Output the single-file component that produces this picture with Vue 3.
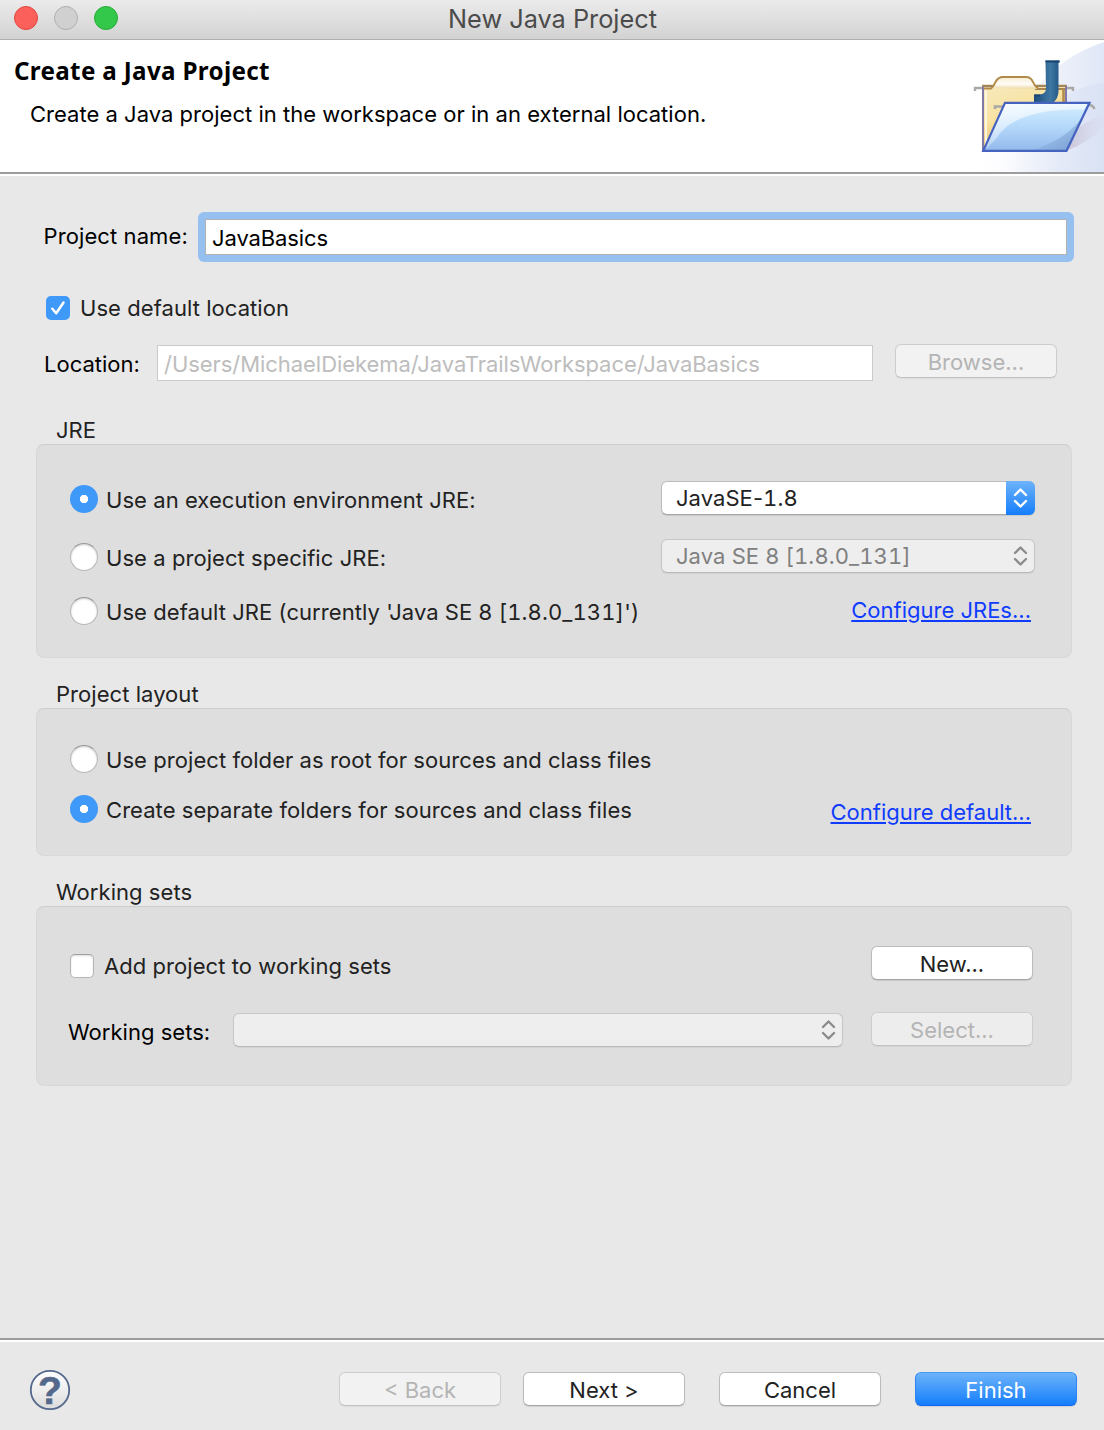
<template>
  <div class="dialog">
    <div class="titlebar">
      <div class="lights">
        <i class="light close"></i>
        <i class="light minimize"></i>
        <i class="light zoom"></i>
      </div>
      <div class="title">New Java Project</div>
    </div>

    <header class="banner">
      <div class="banner-text">
        <h1>Create a Java Project</h1>
        <p>Create a Java project in the workspace or in an external location.</p>
      </div>
      <svg class="banner-icon" width="160" height="132" viewBox="0 0 160 132">
        <defs>
          <linearGradient id="sky" x1="0" y1="0" x2="1" y2="0">
            <stop offset="0" stop-color="#fff" stop-opacity="0" />
            <stop offset="0.5" stop-color="#f4f6fc" />
            <stop offset="1" stop-color="#e0e7f6" />
          </linearGradient>
          <linearGradient id="haze" x1="0" y1="0" x2="1" y2="0">
            <stop offset="0" stop-color="#d5dff3" stop-opacity="0" />
            <stop offset="1" stop-color="#d5dff3" stop-opacity="0.6" />
          </linearGradient>
          <linearGradient id="gold" x1="0" y1="0" x2="0.5" y2="1">
            <stop offset="0" stop-color="#f6e9bd" />
            <stop offset="0.45" stop-color="#f8e3a4" />
            <stop offset="1" stop-color="#eeb95c" />
          </linearGradient>
          <linearGradient id="tab" x1="0" y1="0" x2="0" y2="1">
            <stop offset="0" stop-color="#f6ecd2" />
            <stop offset="0.6" stop-color="#fffdf8" />
            <stop offset="1" stop-color="#ecd9a6" />
          </linearGradient>
          <linearGradient id="front" x1="0" y1="0" x2="0" y2="1">
            <stop offset="0" stop-color="#d6efff" />
            <stop offset="0.5" stop-color="#b4d8fa" />
            <stop offset="1" stop-color="#93b9ec" />
          </linearGradient>
          <linearGradient id="shine" x1="0" y1="0" x2="0.5" y2="1">
            <stop offset="0" stop-color="#fff" stop-opacity="0.85" />
            <stop offset="1" stop-color="#fff" stop-opacity="0.15" />
          </linearGradient>
          <linearGradient id="dusk" x1="0" y1="0.3" x2="1" y2="0.8">
            <stop offset="0" stop-color="#6f94c6" stop-opacity="0" />
            <stop offset="1" stop-color="#6f94c6" stop-opacity="0.65" />
          </linearGradient>
          <linearGradient id="jay" x1="0" y1="0" x2="1" y2="0">
            <stop offset="0" stop-color="#1d4c7c" />
            <stop offset="0.65" stop-color="#3f78a3" />
            <stop offset="1" stop-color="#225686" />
          </linearGradient>
          <linearGradient id="shadow" x1="0" y1="0" x2="1" y2="0">
            <stop offset="0" stop-color="#b9adc6" stop-opacity="0.6" />
            <stop offset="1" stop-color="#d8d2e4" stop-opacity="0.1" />
          </linearGradient>
        </defs>
        <path d="M18 132C68 112 74 30 160 2V132Z" fill="url(#sky)" />
        <path d="M100 72C120 52 140 45 160 43V132H60Z" fill="url(#haze)" />
        <path d="M124 108L134 88Q148 78 160 75V86Q146 102 124 110Z" fill="url(#shadow)" />
        <path d="M31 51V48H38M122 48H129V51" fill="none" stroke="#a9a9a6" stroke-width="2.4" />
        <path d="M39 46H122V110H39Z" fill="url(#gold)" stroke="#8278a8" stroke-width="2" />
        <path d="M42 50V104" stroke="#fdf6df" stroke-width="2" />
        <path d="M38 45.8H122.500M91 49H121" stroke="#a68752" stroke-width="2" />
        <path d="M119.500 49V62" stroke="#b08a4b" stroke-width="2.500" />
        <path d="M47 48Q50 46 51.500 42Q54 37 59 37H82Q87 37 89 42Q90.500 46 94 49Z" fill="url(#tab)" />
        <path d="M40 48.500H47Q50 46 51.500 42Q54 37 59 37H82Q87 37 89 42Q90.500 46 94 48.500" fill="none" stroke="#b18a49" stroke-width="2" />
        <path d="M101.500 20.500H115.500V22.500H114.500V51Q114.500 58 109 63H90V54.500H95Q102 54.500 102 48Z" fill="url(#jay)" />
        <path d="M101.500 21.500H115.500M90.500 55.500H96" stroke="#174570" stroke-width="1.8" />
        <path d="M51 69V66.500H59M145 65Q149 65 150.500 69" fill="none" stroke="#a9a9a6" stroke-width="2.600" />
        <path d="M61 62.800H145.500L122.500 110.800H39.200Z" fill="url(#front)" />
        <path d="M61.500 64H143L140 69.500Q70 68 52 99L43 108H41Z" fill="url(#shine)" />
        <path d="M137 79L122 110H88Q121 100 137 79Z" fill="url(#dusk)" />
        <path d="M61 62.800H145.500L122.500 110.800H39.200Z" fill="none" stroke="#4563bf" stroke-width="2.200" />
      </svg>
    </header>

    <main class="content">
      <div class="name-row">
        <span class="label">Project name:</span>
        <div class="focus-ring"><div class="field">JavaBasics</div></div>
      </div>

      <div class="check default-location">
        <span class="checkbox checked">
          <svg width="24" height="24" viewBox="0 0 24 24">
            <path d="M6.300 12.800L10.200 17.300L17.500 6.500" fill="none" stroke="#fff" stroke-width="2.500" stroke-linecap="round" stroke-linejoin="round" />
          </svg>
        </span>
        <span>Use default location</span>
      </div>

      <div class="location-row">
        <span class="label">Location:</span>
        <div class="field location">/Users/MichaelDiekema/JavaTrailsWorkspace/JavaBasics</div>
        <button class="btn" disabled>Browse...</button>
      </div>

      <section class="group jre">
        <h2>JRE</h2>
        <div class="box">
          <div class="row tall">
            <div class="option"><i class="radio on"></i><span>Use an execution environment JRE:</span></div>
            <div class="select">
              <span>JavaSE-<span class="ver">1.8</span></span>
              <span class="cap"><svg width="16" height="20" viewBox="0 0 16 20"><path d="M2 7L7.500 1.500L13 7M2 13L7.500 18.500L13 13" /></svg></span>
            </div>
          </div>
          <div class="row tall">
            <div class="option"><i class="radio"></i><span>Use a project specific JRE:</span></div>
            <div class="select disabled">
              <span>Java SE 8 <span class="ver">[1.8.0_131]</span></span>
              <span class="cap"><svg width="16" height="20" viewBox="0 0 16 20"><path d="M2 7L7.500 1.500L13 7M2 13L7.500 18.500L13 13" /></svg></span>
            </div>
          </div>
          <div class="row">
            <div class="option"><i class="radio"></i><span>Use default JRE (currently 'Java SE 8 <span class="ver">[1.8.0_131]</span>')</span></div>
            <a class="link">Configure JREs...</a>
          </div>
        </div>
      </section>

      <section class="group layout">
        <h2>Project layout</h2>
        <div class="box">
          <div class="row">
            <div class="option"><i class="radio"></i><span>Use project folder as root for sources and class files</span></div>
          </div>
          <div class="row">
            <div class="option"><i class="radio on"></i><span>Create separate folders for sources and class files</span></div>
            <a class="link">Configure default...</a>
          </div>
        </div>
      </section>

      <section class="group sets">
        <h2>Working sets</h2>
        <div class="box">
          <div class="row">
            <div class="check">
              <span class="checkbox"></span>
              <span>Add project to working sets</span>
            </div>
            <button class="btn">New...</button>
          </div>
          <div class="row">
            <span class="label">Working sets:</span>
            <div class="select disabled">
              <span class="cap"><svg width="16" height="20" viewBox="0 0 16 20"><path d="M2 7L7.500 1.500L13 7M2 13L7.500 18.500L13 13" /></svg></span>
            </div>
            <button class="btn" disabled>Select...</button>
          </div>
        </div>
      </section>
    </main>

    <footer class="footer">
      <svg class="help" width="42" height="42" viewBox="0 0 42 42">
        <defs>
          <linearGradient id="helpFill" x1="0" y1="0" x2="0" y2="1">
            <stop offset="0" stop-color="#fff" />
            <stop offset="1" stop-color="#dcdcdc" />
          </linearGradient>
        </defs>
        <circle cx="21" cy="21" r="19.200" fill="url(#helpFill)" stroke="#54688c" stroke-width="1.800" />
        <text x="21" y="34.500" text-anchor="middle">?</text>
      </svg>
      <div class="buttons">
        <button class="btn" disabled>&lt; Back</button>
        <button class="btn">Next &gt;</button>
        <button class="btn">Cancel</button>
        <button class="btn primary">Finish</button>
      </div>
    </footer>
  </div>
</template>

<script setup>
</script>

<style>
body{margin:0;background:#e8e8e8}
</style>

<style scoped>
.dialog{width:1104px;height:1430px;display:flex;flex-direction:column;background:#e8e8e8;font:400 22px/26px Inter,"Liberation Sans",sans-serif;letter-spacing:.06px;color:#222;overflow:hidden;white-space:nowrap}
.dialog *{box-sizing:border-box}
h1,h2,p{margin:0;font-weight:400}

.titlebar{height:40px;flex:none;display:grid;grid-template-columns:130px 1fr 130px;background:linear-gradient(#ebebeb,#d2d2d2);border-bottom:1px solid #afafaf}
.lights{display:flex;gap:16px;padding:6px 0 0 14px}
.light{width:24px;height:24px;border-radius:50%;border:1px solid}
.close{background:#fc605b;border-color:#e2463f}
.minimize{background:#d0d0d0;border-color:#b0b0b0}
.zoom{background:#34c84a;border-color:#25ab35}
.title{padding:6px 0 0 1px;text-align:center;font-size:25.3px;color:#4b4b4b;letter-spacing:0}

.banner{height:136px;flex:none;display:flex;justify-content:space-between;background:#fff;border-bottom:2px solid #fff;box-shadow:inset 0 -2px #9c9c9c;color:#000}
.banner-text{padding:17px 0 0 14px}
.banner h1{font:700 24.2px/28px "Noto Sans","Open Sans",sans-serif;letter-spacing:.33px}
.banner p{padding:16px 0 0 16px;letter-spacing:.02px}
.banner-icon{display:block}

.content{flex:1;padding:36px 32px 0 36px}
.label{color:#000;letter-spacing:.1px}
.name-row{display:flex;align-items:center;height:50px;padding-left:8px;margin-right:-2px}
.name-row .label{width:154px;padding-bottom:2px;margin-left:-.5px;margin-right:.5px}
.focus-ring{flex:1;height:50px;padding:7px;border-radius:6px;background:#96c0f0}
.field{height:36px;padding:5px 0 0 6px;border:1px solid #b3b3b3;background:#fff;color:#000;letter-spacing:-.1px}
.default-location{margin:34px 0 0 10px}
.check{display:flex;align-items:center;gap:10px;height:24px}
.checkbox{width:24px;height:24px;border-radius:5px;border:1px solid #b5b5b5;border-top-color:#a0a0a0;background:#fff;box-shadow:inset 0 1px 2px #ddd}
.checkbox.checked{border:0;background:#3f99f8;box-shadow:none}
.checkbox svg{display:block}
.location-row{display:flex;margin-top:24px;height:37px;padding-left:8px}
.location-row .label{width:113px;padding-top:7px;letter-spacing:0}
.location{width:716px;margin:1px 22px 0 0;border-color:#cbcbcb;color:#bdbdbd;letter-spacing:-.05px}

.btn{display:block;width:162px;height:34px;padding:2px 0 0;border:1px solid #bcbcbc;border-bottom-color:#a5a5a5;border-radius:6px;background:#fff;box-shadow:0 1px 1px rgba(0,0,0,.1);font:inherit;line-height:26px;letter-spacing:0;color:#222;text-align:center}
.btn:disabled{border-color:#cdcdcd;border-bottom-color:#c2c2c2;background:rgba(255,255,255,.45);color:#b4b4b4;box-shadow:0 1px 1px rgba(0,0,0,.05)}
.primary{border-color:#4699f6 #2f84f6 #0f68f5;background:linear-gradient(#6db3fa,#157efb);color:#fff}

.group{margin-top:23px}
.jre{margin-top:36px}
.group h2{font-size:22px;line-height:26px;padding-left:20px;letter-spacing:.05px}
.box{width:1036px;margin-top:1px;display:flex;flex-direction:column;border:1px solid #d8d8d8;border-top-color:#cdcdcd;border-radius:8px;background:#dedede}
.jre .box{height:214px;padding:36px 36px 0 33px;gap:24px}
.layout .box{height:148px;padding:36px 36px 0 33px;gap:22px}
.sets .box{height:180px;padding:39px 38px 0 33px;gap:32px}
.row{display:flex;align-items:center;justify-content:space-between;height:28px}
.row.tall{height:34px}
.tall .option{margin-top:2px}
.option{display:flex;gap:8px;height:28px}
.option > span{padding-top:2px}
.radio{width:28px;height:28px;border-radius:50%;border:1px solid #b8b8b8;border-top-color:#979797;background:#fff;box-shadow:inset 0 1px 2px #ccc}
.radio.on{border:0;background:radial-gradient(circle,#fff 3.800px,#3f99f8 4.500px);box-shadow:none}
.ver{font-feature-settings:"tnum";letter-spacing:.1px}
.select{display:flex;justify-content:space-between;width:374px;height:34px;padding-left:14px;border:1px solid #bcbcbc;border-bottom-color:#a5a5a5;border-radius:6px;background:#fff;box-shadow:0 1px 1px rgba(0,0,0,.1)}
.select > span:first-child:not(.cap){padding-top:3px}
.cap{display:flex;align-items:center;justify-content:center;width:29px;height:34px;margin:-1px -1px 0 auto;border-radius:0 6px 6px 0;background:linear-gradient(#6db3fa,#157efb)}
.cap path{fill:none;stroke:#fff;stroke-width:2.400;stroke-linecap:round;stroke-linejoin:round}
.select.disabled{background:#eee;border-color:#c6c6c6;border-bottom-color:#b9b9b9;color:#808080;box-shadow:0 1px 1px rgba(0,0,0,.05)}
.disabled .cap{background:none}
.disabled .cap path{stroke:#8c8c8c}
.link{color:#0f3cff;text-decoration:underline;text-decoration-thickness:2px;text-underline-offset:2px;letter-spacing:0;margin-right:4px}
.jre .link{margin-bottom:2px}
.layout .link{margin-top:6px}
.sets .row:first-child{height:34px}
.sets .check{margin-top:6px}
.sets .row:last-child{height:35px;align-items:flex-start;justify-content:flex-start}
.sets .label{width:165px;margin-left:-2px;padding-top:7px;letter-spacing:.03px}
.sets .select{width:610px;margin:1px 28px 0 0}

.footer{height:92px;flex:none;display:flex;justify-content:space-between;padding:28px 27px 0 29px;border-top:2px solid #9c9c9c;box-shadow:inset 0 2px #fff}
.help{display:block;margin-top:1px}
.help text{font:700 39px "Liberation Sans",sans-serif;fill:#54688c;stroke:#54688c;stroke-width:.6px;letter-spacing:0}
.buttons{display:flex;gap:34px;padding-top:4px}
.buttons .btn:first-child{margin-right:-12px}
</style>
